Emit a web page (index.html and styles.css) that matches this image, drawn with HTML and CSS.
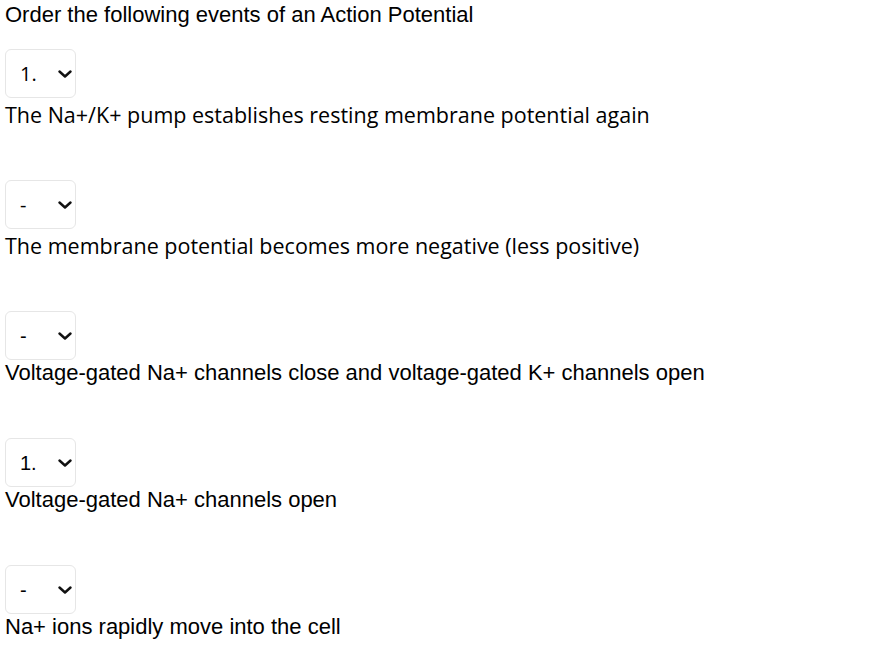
FILE: index.html
```html
<!DOCTYPE html>
<html lang="en">
<head>
    <meta charset="UTF-8">
    <title>Action Potential</title>
    <link rel="stylesheet" href="styles.css">
</head>
<body>
    <div class="question">Order the following events of an Action Potential</div>
    <ul class="events">
        <li class="event sans-os">
            <div class="order-select">
                <select>
                    <option>-</option>
                    <option selected>1.</option>
                    <option>2.</option>
                    <option>3.</option>
                    <option>4.</option>
                    <option>5.</option>
                </select>
                <svg class="chevron" viewBox="0 0 14 8" fill="none" stroke="currentColor" stroke-width="2.4" stroke-linecap="round" stroke-linejoin="round"><polyline points="1.5 1.5 7 6.5 12.5 1.5"/></svg>
            </div>
            <div class="event-text">The Na+/K+ pump establishes resting membrane potential again</div>
        </li>
        <li class="event sans-os">
            <div class="order-select">
                <select>
                    <option selected>-</option>
                    <option>1.</option>
                    <option>2.</option>
                    <option>3.</option>
                    <option>4.</option>
                    <option>5.</option>
                </select>
                <svg class="chevron" viewBox="0 0 14 8" fill="none" stroke="currentColor" stroke-width="2.4" stroke-linecap="round" stroke-linejoin="round"><polyline points="1.5 1.5 7 6.5 12.5 1.5"/></svg>
            </div>
            <div class="event-text">The membrane potential becomes more negative (less positive)</div>
        </li>
        <li class="event">
            <div class="order-select">
                <select>
                    <option selected>-</option>
                    <option>1.</option>
                    <option>2.</option>
                    <option>3.</option>
                    <option>4.</option>
                    <option>5.</option>
                </select>
                <svg class="chevron" viewBox="0 0 14 8" fill="none" stroke="currentColor" stroke-width="2.4" stroke-linecap="round" stroke-linejoin="round"><polyline points="1.5 1.5 7 6.5 12.5 1.5"/></svg>
            </div>
            <div class="event-text">Voltage-gated Na+ channels close and voltage-gated K+ channels open</div>
        </li>
        <li class="event">
            <div class="order-select">
                <select>
                    <option>-</option>
                    <option selected>1.</option>
                    <option>2.</option>
                    <option>3.</option>
                    <option>4.</option>
                    <option>5.</option>
                </select>
                <svg class="chevron" viewBox="0 0 14 8" fill="none" stroke="currentColor" stroke-width="2.4" stroke-linecap="round" stroke-linejoin="round"><polyline points="1.5 1.5 7 6.5 12.5 1.5"/></svg>
            </div>
            <div class="event-text">Voltage-gated Na+ channels open</div>
        </li>
        <li class="event">
            <div class="order-select">
                <select>
                    <option selected>-</option>
                    <option>1.</option>
                    <option>2.</option>
                    <option>3.</option>
                    <option>4.</option>
                    <option>5.</option>
                </select>
                <svg class="chevron" viewBox="0 0 14 8" fill="none" stroke="currentColor" stroke-width="2.4" stroke-linecap="round" stroke-linejoin="round"><polyline points="1.5 1.5 7 6.5 12.5 1.5"/></svg>
            </div>
            <div class="event-text">Na+ ions rapidly move into the cell</div>
        </li>
    </ul>
</body>
</html>
```

FILE: styles.css
```css
body {
    margin: 0;
    padding: 2px 5px;
    font-family: 'Liberation Sans', Arial, sans-serif;
    font-size: 22px;
    color: #000;
    background: #fff;
}
.question {
    line-height: 25px;
    margin-bottom: 22px;
}
.events {
    list-style: none;
    margin: 0;
    padding: 0;
}
.event {
    margin-bottom: 53px;
}
.event-text {
    line-height: 25px;
}
.sans-os {
    font-family: 'Open Sans', sans-serif;
    font-size: 21.5px;
    margin-bottom: 51px;
}
.sans-os .event-text {
    line-height: 29px;
    padding-top: 2px;
}
.order-select {
    position: relative;
    width: 71px;
}
.order-select select {
    appearance: none;
    -webkit-appearance: none;
    width: 71px;
    height: 49px;
    padding: 0 0 0 14px;
    border: 1px solid #e6e6e6;
    border-radius: 6px;
    background: #fff;
    font-family: inherit;
    font-size: 20px;
    color: #000;
    box-sizing: border-box;
    cursor: pointer;
}
/* arrow sits over the native select */
.chevron {
    position: absolute;
    top: 21px;
    left: 53px;
    width: 14px;
    height: 8px;
    color: #111;
    pointer-events: none;
}
```
